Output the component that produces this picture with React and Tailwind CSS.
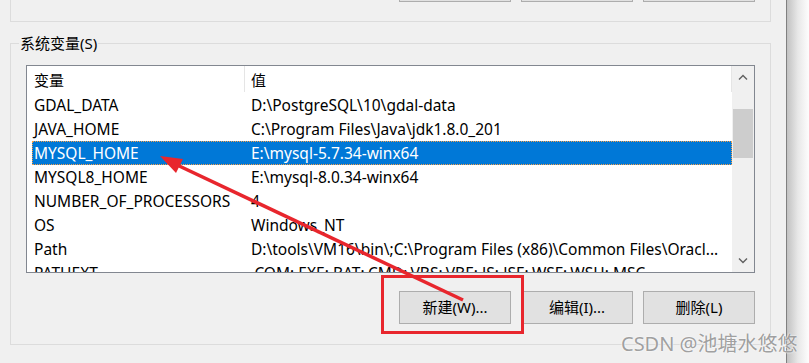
import React from 'react';

const rows = [
  ['GDAL_DATA', 'D:\\PostgreSQL\\10\\gdal-data'],
  ['JAVA_HOME', 'C:\\Program Files\\Java\\jdk1.8.0_201'],
  ['MYSQL_HOME', 'E:\\mysql-5.7.34-winx64'],
  ['MYSQL8_HOME', 'E:\\mysql-8.0.34-winx64'],
  ['NUMBER_OF_PROCESSORS', '4'],
  ['OS', 'Windows_NT'],
  ['Path', 'D:\\tools\\VM16\\bin\\;C:\\Program Files (x86)\\Common Files\\Oracl...'],
  ['PATHEXT', '.COM;.EXE;.BAT;.CMD;.VBS;.VBE;.JS;.JSE;.WSF;.WSH;.MSC'],
];

const selected = 'MYSQL_HOME';

function Chevron({ up }) {
  return (
    <svg width="10" height="6" viewBox="0 0 10 6" className="block">
      <path d={up ? 'M1 5.5 L5 1.5 L9 5.5' : 'M1 0.5 L5 4.5 L9 0.5'} fill="none" stroke="#606060" strokeWidth="1.4" />
    </svg>
  );
}

function WinButton({ children }) {
  return (
    <button className="w-[112px] h-[33px] bg-[#e1e1e1] border border-[#adadad] text-[15px] text-black leading-none">
      {children}
    </button>
  );
}

export default function App() {
  return (
    <div className="relative w-[809px] h-[363px] overflow-hidden flex bg-white font-['Noto_Sans','Noto_Sans_CJK_SC',sans-serif] text-black">
      <div className="w-[786px] h-full bg-[#f0f0f0] flex flex-col pl-[10px] pr-[15px]">
        {/* user variables box (bottom edge only) */}
        <div className="h-[22px] border-x border-b border-[#dcdcdc] flex justify-end gap-[10px] pr-[15px]">
          <div className="w-[112px] h-[2px] bg-[#e1e1e1] border-x border-b border-[#adadad]" />
          <div className="w-[112px] h-[2px] bg-[#e1e1e1] border-x border-b border-[#adadad]" />
          <div className="w-[112px] h-[2px] bg-[#e1e1e1] border-x border-b border-[#adadad]" />
        </div>

        {/* system variables */}
        <div className="relative mt-[21px] h-[302px] border border-[#dcdcdc] pt-[21px] px-[15px] flex flex-col">
          <span className="absolute -top-[12px] left-[8px] px-[1px] bg-[#f0f0f0] text-[15px] leading-[22px]">系统变量(S)</span>

          <div className="h-[208px] border border-[#828790] bg-white flex">
            <div className="flex-1 overflow-hidden flex flex-col">
              <div className="h-[27px] flex shrink-0 text-[15px] leading-[28px]">
                <div className="w-[217px] pl-[7px]">变量</div>
                <div className="flex-1 pl-[6px] border-l border-[#e5e5e5] h-[26px]">值</div>
                <div className="w-px h-[26px] bg-[#e5e5e5]" />
              </div>
              {rows.map(([name, value]) => {
                const sel = name === selected;
                return (
                  <div
                    key={name}
                    className={
                      'ml-[5px] h-[24px] shrink-0 flex text-[15.5px] leading-[22px] whitespace-nowrap border border-dotted ' +
                      (sel ? 'bg-[#0078d7] text-white border-[#f5a04a]' : 'border-transparent')
                    }
                  >
                    <div className="w-[211px] pl-[1px]">{name}</div>
                    <div className="flex-1 pl-[7px]">{value}</div>
                  </div>
                );
              })}
            </div>
            <div className="w-[22px] bg-[#f0f0f0] flex flex-col">
              <div className="h-[22px] flex items-center justify-center">
                <Chevron up />
              </div>
              <div className="flex-1 pt-[21px] px-px">
                <div className="h-[49px] bg-[#cdcdcd]" />
              </div>
              <div className="h-[22px] flex items-center justify-center">
                <Chevron />
              </div>
            </div>
          </div>

          <div className="mt-[18px] flex justify-end gap-[10px]">
            <WinButton>新建(W)...</WinButton>
            <WinButton>编辑(I)...</WinButton>
            <WinButton>删除(L)</WinButton>
          </div>
        </div>
      </div>
      <div className="w-px h-full bg-[#808080]" />
      <div className="flex-1 h-full bg-gradient-to-r from-[#c2c2c2] via-[#e8e8e8] to-[#fdfdfd]" />

      {/* annotation overlay */}
      <svg className="absolute inset-0 pointer-events-none" width="809" height="363">
        <rect x="382.5" y="276.5" width="140" height="56" fill="none" stroke="#e8262d" strokeWidth="3" />
        <line x1="175" y1="164" x2="463" y2="300" stroke="#e8262d" strokeWidth="3.5" />
        <polygon points="160,156 183,159 176,173" fill="#e8262d" />
      </svg>
      <div className="absolute left-[621px] top-[332px] text-[20px] leading-[24px] text-[#a0a0a0] whitespace-nowrap [text-shadow:0_0_2px_#fff,0_0_1px_#fff]">
        CSDN @池塘水悠悠
      </div>
    </div>
  );
}
